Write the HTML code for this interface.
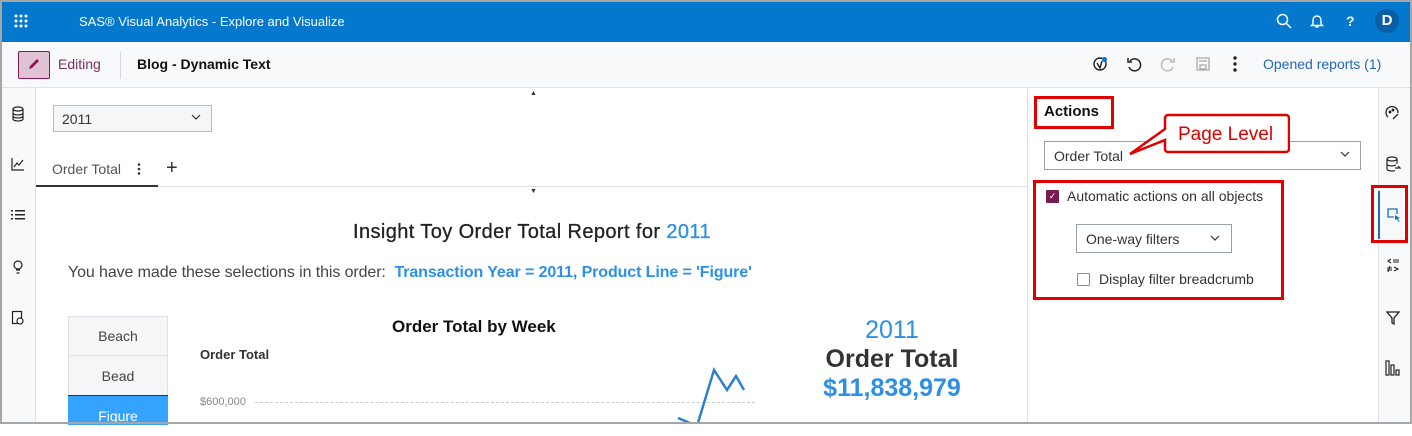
<!DOCTYPE html>
<html><head><style>
*{box-sizing:border-box;margin:0;padding:0}
body{width:1412px;height:424px;overflow:hidden;font-family:"Liberation Sans",sans-serif;background:#fff;position:relative}
.a{position:absolute}
.frame{left:0;top:0;width:1412px;height:424px;border:2px solid #a6a6a6;z-index:50;pointer-events:none}
.red{border:3px solid #e00000}
</style></head><body>
<div class="a frame"></div>
<!-- header -->
<div class="a" style="left:0;top:0;width:1412px;height:42px;background:#0378cd"></div>
<svg class="a" style="left:14px;top:14px" width="14" height="14"><g fill="#fff"><circle cx="2" cy="2" r="1.5"/><circle cx="7" cy="2" r="1.5"/><circle cx="12" cy="2" r="1.5"/><circle cx="2" cy="7" r="1.5"/><circle cx="7" cy="7" r="1.5"/><circle cx="12" cy="7" r="1.5"/><circle cx="2" cy="12" r="1.5"/><circle cx="7" cy="12" r="1.5"/><circle cx="12" cy="12" r="1.5"/></g></svg>
<div class="a" style="left:79px;top:14px;color:#fff;font-size:13px">SAS® Visual Analytics - Explore and Visualize</div>
<svg class="a" style="left:1276px;top:13px" width="16" height="16" fill="none" stroke="#fff" stroke-width="1.5"><circle cx="6.5" cy="6.5" r="5"/><path d="M10 10l5 5"/></svg>
<svg class="a" style="left:1310px;top:13px" width="14" height="16" fill="none" stroke="#fff" stroke-width="1.4"><path d="M3 11V7a4 4 0 018 0v4l1.5 1.5h-11z M5.5 14h3"/></svg>
<div class="a" style="left:1346px;top:13px;color:#fff;font-size:14px;font-weight:bold">?</div>
<div class="a" style="left:1375px;top:9px;width:24px;height:24px;border-radius:50%;background:#0a5ea8;color:#fff;font-weight:bold;font-size:15px;text-align:center;line-height:24px">D</div>
<!-- toolbar -->
<div class="a" style="left:0;top:42px;width:1412px;height:46px;background:#f8f9fa;border-bottom:1px solid #dfe1e5"></div>
<div class="a" style="left:18px;top:51px;width:32px;height:28px;background:#e0c3d2;border:1px solid #8a1652;border-radius:2px"></div>
<svg class="a" style="left:27px;top:57px" width="14" height="14"><path d="M2 12l1-3 7-7 2 2-7 7z" fill="#8a1652"/></svg>
<div class="a" style="left:58px;top:56px;font-size:14px;color:#7a2c58">Editing</div>
<div class="a" style="left:120px;top:51px;width:1px;height:28px;background:#d5d8dc"></div>
<div class="a" style="left:137px;top:56px;font-size:14px;font-weight:bold;color:#111">Blog - Dynamic Text</div>
<svg class="a" style="left:1092px;top:56px" width="16" height="16" fill="none" stroke="#222" stroke-width="1.4"><circle cx="8" cy="8" r="6"/><path d="M5 7l3 5 2-7"/><circle cx="12.5" cy="3.5" r="2.5" fill="#0378cd" stroke="none"/></svg>
<svg class="a" style="left:1126px;top:56px" width="16" height="16" fill="none" stroke="#222" stroke-width="1.5"><path d="M4 5a6 6 0 11-1 6"/><path d="M2 2v4h4"/></svg>
<svg class="a" style="left:1160px;top:56px" width="16" height="16" fill="none" stroke="#bbb" stroke-width="1.5"><path d="M12 5a6 6 0 101 6"/><path d="M14 2v4h-4"/></svg>
<svg class="a" style="left:1195px;top:56px" width="16" height="16" fill="none" stroke="#aaa" stroke-width="1.3"><rect x="2" y="2" width="12" height="12"/><rect x="5" y="9" width="6" height="4"/><path d="M4 5h8"/></svg>
<svg class="a" style="left:1232px;top:55px" width="6" height="18" fill="#222"><circle cx="3" cy="3" r="1.7"/><circle cx="3" cy="9" r="1.7"/><circle cx="3" cy="15" r="1.7"/></svg>
<div class="a" style="left:1263px;top:56px;font-size:14px;color:#2466b8">Opened reports (1)</div>
<!-- left rail -->
<div class="a" style="left:2px;top:88px;width:34px;height:334px;background:#f8f9fa;border-right:1px solid #dfe1e5"></div>
<svg class="a" style="left:11px;top:106px" width="14" height="16" fill="none" stroke="#222" stroke-width="1.2"><ellipse cx="7" cy="3" rx="5" ry="2"/><path d="M2 3v10c0 2.6 10 2.6 10 0V3M2 7c0 2.6 10 2.6 10 0M2 10c0 2.6 10 2.6 10 0"/></svg>
<svg class="a" style="left:11px;top:157px" width="14" height="14" fill="none" stroke="#222" stroke-width="1.2"><path d="M1 1v12h12M3 10l3-4 2 2 4-5"/></svg>
<svg class="a" style="left:10px;top:208px" width="16" height="14" fill="#222"><rect x="1" y="2" width="2" height="1.5"/><rect x="5" y="2" width="10" height="1.5"/><rect x="1" y="6" width="2" height="1.5"/><rect x="5" y="6" width="10" height="1.5"/><rect x="1" y="10" width="2" height="1.5"/><rect x="5" y="10" width="10" height="1.5"/></svg>
<svg class="a" style="left:12px;top:259px" width="12" height="16" fill="none" stroke="#222" stroke-width="1.2"><circle cx="6" cy="6" r="4"/><path d="M4 11h4M4.5 14h3"/></svg>
<svg class="a" style="left:11px;top:310px" width="14" height="16" fill="none" stroke="#222" stroke-width="1.2"><rect x="1.5" y="1.5" width="9" height="12"/><circle cx="9" cy="11" r="3" fill="#fff"/></svg>
<!-- main -->
<div class="a" style="left:53px;top:105px;width:159px;height:27px;border:1px solid #b8bcc2;background:#f5f6f7;font-size:14px;color:#333;padding:5px 8px">2011</div>
<svg class="a" style="left:191px;top:114px" width="10" height="7" fill="none" stroke="#333" stroke-width="1.2"><path d="M1 1l4 4 4-4"/></svg>
<div class="a" style="left:530px;top:90px;font-size:7px;color:#333">▲</div>
<div class="a" style="left:530px;top:188px;font-size:7px;color:#333">▼</div>
<div class="a" style="left:52px;top:161px;font-size:14px;color:#555">Order Total</div>
<svg class="a" style="left:136px;top:162px" width="6" height="14" fill="#333"><circle cx="3" cy="2.5" r="1.3"/><circle cx="3" cy="7" r="1.3"/><circle cx="3" cy="11.5" r="1.3"/></svg>
<div class="a" style="left:166px;top:157px;font-size:20px;color:#333">+</div>
<div class="a" style="left:36px;top:186px;width:992px;height:1px;background:#dfe1e5"></div>
<div class="a" style="left:36px;top:185px;width:122px;height:2px;background:#333"></div>
<div class="a" style="left:36px;top:221px;width:992px;text-align:center;font-size:20px;color:#222;letter-spacing:0.4px;-webkit-text-stroke:0.3px #222">Insight Toy Order Total Report for <span style="color:#2d8fe6;-webkit-text-stroke:0.3px #2d8fe6">2011</span></div>
<div class="a" style="left:68px;top:264px;font-size:16px;color:#444;letter-spacing:-0.1px">You have made these selections in this order:&nbsp; <b style="color:#2d8fe6">Transaction Year = 2011, Product Line = 'Figure'</b></div>
<div class="a" style="left:68px;top:316px;width:100px;height:108px;border:1px solid #dfe1e5;background:#f5f6f8"></div>
<div class="a" style="left:68px;top:316px;width:100px;height:40px;font-size:14px;color:#444;text-align:center;line-height:40px;border-bottom:1px solid #dfe1e5">Beach</div>
<div class="a" style="left:68px;top:356px;width:100px;height:40px;font-size:14px;color:#444;text-align:center;line-height:40px">Bead</div>
<div class="a" style="left:68px;top:395px;width:100px;height:30px;background:#36a2ff;border-top:1px solid #333;font-size:14px;color:#fff;text-align:center;line-height:40px">Figure</div>
<div class="a" style="left:392px;top:317px;font-size:17px;font-weight:bold;color:#111">Order Total by Week</div>
<div class="a" style="left:200px;top:347px;font-size:13px;font-weight:bold;color:#333">Order Total</div>
<div class="a" style="left:200px;top:396px;font-size:11px;color:#888">$600,000</div>
<div class="a" style="left:255px;top:402px;width:500px;border-top:1px dashed #ccc"></div>
<svg class="a" style="left:0;top:0" width="1412" height="424" fill="none" stroke="#2d7fd0" stroke-width="2.5"><path d="M678 418l12 5M697 426l17-56 13 20 9-14 8 14"/></svg>
<div class="a" style="left:800px;top:316px;width:184px;text-align:center;font-size:25px;color:#2d8fe6">2011</div>
<div class="a" style="left:800px;top:345px;width:184px;text-align:center;font-size:25px;font-weight:bold;color:#333">Order Total</div>
<div class="a" style="left:800px;top:374px;width:184px;text-align:center;font-size:25px;font-weight:bold;color:#2d8fe6">$11,838,979</div>
<!-- right panel -->
<div class="a" style="left:1027px;top:88px;width:1px;height:334px;background:#dfe1e5"></div>
<div class="a" style="left:1378px;top:88px;width:32px;height:334px;background:#f8f9fa;border-left:1px solid #dfe1e5"></div>
<div class="a red" style="left:1034px;top:96px;width:80px;height:33px"></div>
<div class="a" style="left:1044px;top:103px;font-size:15px;font-weight:bold;color:#111">Actions</div>
<div class="a" style="left:1044px;top:141px;width:317px;height:29px;border:1px solid #9aa0a8;font-size:14px;color:#333;padding:6px 9px">Order Total</div>
<svg class="a" style="left:1340px;top:151px" width="10" height="7" fill="none" stroke="#333" stroke-width="1.2"><path d="M1 1l4 4 4-4"/></svg>
<svg class="a" style="left:1128px;top:113px" width="162" height="50"><path d="M40 2h118a3 3 0 013 3v31a3 3 0 01-3 3H40a3 3 0 01-3-3v-9L2 41l35-25V5a3 3 0 013-3z" fill="#fff" stroke="#e00000" stroke-width="2.5"/></svg>
<div class="a" style="left:1178px;top:124px;font-size:19px;color:#e00000">Page Level</div>
<div class="a red" style="left:1033px;top:180px;width:251px;height:120px"></div>
<div class="a" style="left:1046px;top:190px;width:13px;height:13px;background:#7a1c4f;border-radius:1px;color:#fff;font-size:9px;text-align:center;line-height:13px">✓</div>
<div class="a" style="left:1067px;top:188px;font-size:14px;color:#333">Automatic actions on all objects</div>
<div class="a" style="left:1076px;top:224px;width:156px;height:29px;border:1px solid #9aa0a8;font-size:14px;color:#333;padding:6px 9px">One-way filters</div>
<svg class="a" style="left:1210px;top:235px" width="10" height="7" fill="none" stroke="#333" stroke-width="1.2"><path d="M1 1l4 4 4-4"/></svg>
<div class="a" style="left:1077px;top:273px;width:13px;height:13px;border:1px solid #8a9099;border-radius:1px"></div>
<div class="a" style="left:1099px;top:271px;font-size:14px;color:#333">Display filter breadcrumb</div>
<!-- right rail icons -->
<svg class="a" style="left:1385px;top:106px" width="16" height="16" fill="none" stroke="#222" stroke-width="1.3"><path d="M3 11a6 6 0 1110-4M8 13l5-5"/><circle cx="5" cy="6" r=".8" fill="#222"/><circle cx="8" cy="4" r=".8" fill="#222"/></svg>
<svg class="a" style="left:1385px;top:156px" width="16" height="16" fill="none" stroke="#222" stroke-width="1.2"><ellipse cx="7" cy="3" rx="5" ry="2"/><path d="M2 3v10c0 2 6 2.5 8 1.5M2 8c0 2 6 2.5 9 1M12 3v5M10 12h5l-2-2"/></svg>
<div class="a red" style="left:1371px;top:185px;width:37px;height:58px"></div>
<div class="a" style="left:1378px;top:191px;width:2px;height:48px;background:#1a6ec2"></div>
<svg class="a" style="left:1386px;top:207px" width="16" height="16" fill="none" stroke="#1a6ec2" stroke-width="1.3"><path d="M8 10H2V2h9v5"/><path d="M9 8l5 3-2 .5 1.5 3-1 .5-1.5-3L9 13z" fill="#1a6ec2" stroke="none"/></svg>
<svg class="a" style="left:1386px;top:258px" width="14" height="16" fill="none" stroke="#222" stroke-width="1.1"><path d="M5 1L2 3l3 2M7 2h6M7 4h6M1 10h5M1 12h5M4 8l-2 6M8 9l4 2-4 2"/></svg>
<svg class="a" style="left:1386px;top:310px" width="14" height="16" fill="none" stroke="#222" stroke-width="1.3"><path d="M1 2h12L8 8v6l-2-1V8z"/></svg>
<svg class="a" style="left:1385px;top:360px" width="16" height="16" fill="none" stroke="#222" stroke-width="1.2"><rect x="1" y="1" width="3" height="14"/><rect x="6" y="5" width="3" height="10"/><rect x="11" y="10" width="3" height="5"/></svg>
</body></html>
